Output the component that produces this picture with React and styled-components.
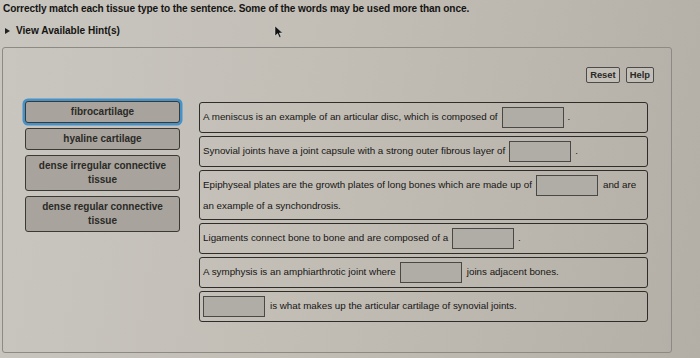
import React from "react";
import styled, { createGlobalStyle } from "styled-components";

const GlobalStyle = createGlobalStyle`
    html, body {
        margin: 0;
        padding: 0;
        width: 700px;
        height: 358px;
        overflow: hidden;
    }
    body {
        font-family: "Liberation Sans", Arial, sans-serif;
        color: #151412;
        background: linear-gradient(100deg, #c9c6c0 0%, #c2beb6 45%, #b4afa6 100%);
    }
`;

const tiles = [
    { label: "fibrocartilage", focused: true },
    { label: "hyaline cartilage" },
    { label: "dense irregular connective tissue" },
    { label: "dense regular connective tissue" },
];

const sentences = [
    ["A meniscus is an example of an articular disc, which is composed of", "blank", "."],
    ["Synovial joints have a joint capsule with a strong outer fibrous layer of", "blank", "."],
    [
        "Epiphyseal plates are the growth plates of long bones which are made up of",
        "blank",
        "and are an example of a synchondrosis.",
    ],
    ["Ligaments connect bone to bone and are composed of a", "blank", "."],
    ["A symphysis is an amphiarthrotic joint where", "blank", "joins adjacent bones."],
    ["blank", "is what makes up the articular cartilage of synovial joints."],
];

export default function App() {
    return (
        <Page>
            <GlobalStyle />
            <Title>
                Correctly match each tissue type to the sentence. Some of the words may be used more than once.
            </Title>
            <Hint>
                <Triangle />
                View Available Hint(s)
            </Hint>
            <Cursor viewBox="0 0 10 14">
                <path d="M1 1 L1 11 L3.6 8.6 L5.4 12.6 L7 11.9 L5.3 8 L8.6 8 Z" fill="#111" stroke="#ddd" strokeWidth="0.5" />
            </Cursor>
            <Panel>
                <Toolbar>
                    <ToolButton>Reset</ToolButton>
                    <ToolButton>Help</ToolButton>
                </Toolbar>
                <Body>
                    <TileColumn>
                        {tiles.map((t) => (
                            <Tile key={t.label} $focused={t.focused}>
                                {t.label}
                            </Tile>
                        ))}
                    </TileColumn>
                    <SentenceColumn>
                        {sentences.map((parts, i) => (
                            <Sentence key={i}>
                                {parts.map((p, j) =>
                                    p === "blank" ? (
                                        <Blank key={j} />
                                    ) : p === "." ? (
                                        <Dot key={j}>.</Dot>
                                    ) : (
                                        <Words key={j}>{p}</Words>
                                    )
                                )}
                            </Sentence>
                        ))}
                    </SentenceColumn>
                </Body>
            </Panel>
        </Page>
    );
}

const Page = styled.div`
    position: relative;
    height: 358px;
    padding: 3px 0 0 2px;
    box-sizing: border-box;
`;

const Title = styled.div`
    font-size: 10.1px;
    font-weight: bold;
    line-height: 12px;
    letter-spacing: -0.1px;
    padding-left: 1px;
`;

const Hint = styled.div`
    display: flex;
    align-items: center;
    gap: 6px;
    margin-top: 10px;
    padding-left: 3px;
    font-size: 10.1px;
    font-weight: bold;
    line-height: 12px;
`;

const Triangle = styled.span`
    width: 0;
    height: 0;
    border-top: 3.5px solid transparent;
    border-bottom: 3.5px solid transparent;
    border-left: 5px solid #222;
`;

const Cursor = styled.svg`
    position: absolute;
    left: 274px;
    top: 25px;
    width: 10px;
    height: 14px;
`;

const Panel = styled.div`
    margin-top: 10px;
    width: 670px;
    height: 306px;
    box-sizing: border-box;
    border: 1px solid #8d8a84;
    border-radius: 3px;
`;

const Toolbar = styled.div`
    display: flex;
    justify-content: flex-end;
    gap: 6px;
    padding: 19px 17px 0 0;
`;

const ToolButton = styled.div`
    height: 16px;
    padding: 0 3px;
    box-sizing: border-box;
    border: 1px solid #4d4b47;
    border-radius: 2px;
    background: #c2bfb8;
    font-size: 9.4px;
    font-weight: bold;
    line-height: 14px;
    color: #2a2926;
`;

const Body = styled.div`
    display: flex;
    gap: 19px;
    padding: 16px 0 0 22px;
`;

const TileColumn = styled.div`
    display: flex;
    flex-direction: column;
    gap: 5px;
    width: 155px;
    padding-top: 2px;
`;

const Tile = styled.div`
    min-height: 22px;
    box-sizing: border-box;
    padding: 3px 8px;
    border: 1.5px solid #3a3935;
    border-radius: 3px;
    background: #a8a49d;
    font-size: 10px;
    font-weight: bold;
    line-height: 14px;
    text-align: center;
    color: #2b2a27;
    box-shadow: ${(p) => (p.$focused ? "0 0 0 2.5px #4592c8" : "none")};
`;

const SentenceColumn = styled.div`
    display: flex;
    flex-direction: column;
    gap: 3px;
    width: 449px;
    padding-top: 3px;
`;

const Sentence = styled.div`
    box-sizing: border-box;
    padding: 4px 3px 4px 3px;
    border: 1.5px solid #2e2d2a;
    border-radius: 3px;
    font-size: 9.8px;
    line-height: 19px;
    color: #161513;
`;

const Words = styled.span`
    & + div {
        margin-left: 4px;
    }
    div + & {
        margin-left: 5px;
    }
`;

const Blank = styled.div`
    display: inline-block;
    width: 62px;
    height: 21px;
    box-sizing: border-box;
    vertical-align: middle;
    border: 1px solid #4a4844;
    background: #b0ada6;
`;

const Dot = styled.span`
    margin-left: 4px;
`;
